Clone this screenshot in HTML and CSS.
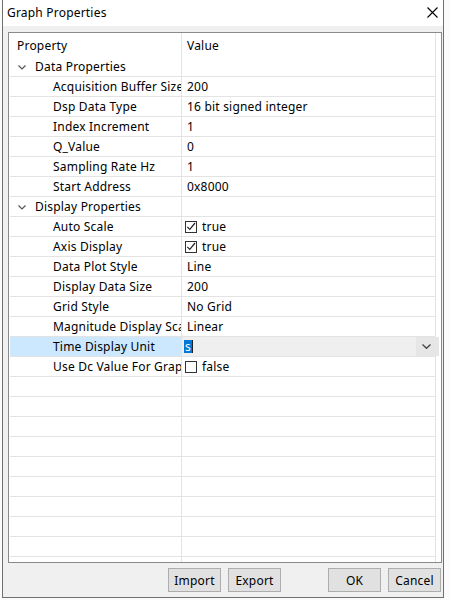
FILE: index.html
```html
<!DOCTYPE html>
<html>
<head>
<meta charset="utf-8">
<title>Graph Properties</title>
<link rel="stylesheet" href="styles.css">
</head>
<body>
<div class="dialog">
  <div class="titlebar">
    <span class="title">Graph Properties</span>
    <svg class="close" width="11" height="11" viewBox="0 0 11 11"><path d="M0.5 0.5 L10.5 10.5 M10.5 0.5 L0.5 10.5" stroke="#000" stroke-width="1.1" fill="none"/></svg>
  </div>
  <div class="content">
    <div class="grid">
      <div class="rows">
        <div class="row header"><div class="name">Property</div><div class="value">Value</div></div>
        <div class="row cat"><div class="name"><svg class="chev" width="8" height="5" viewBox="0 0 8 5"><polyline points="0.5,0.5 4,4 7.5,0.5" stroke="#555" stroke-width="1.2" fill="none"/></svg>Data Properties</div><div class="value"></div></div>
        <div class="row"><div class="name item">Acquisition Buffer Size</div><div class="value">200</div></div>
        <div class="row"><div class="name item">Dsp Data Type</div><div class="value">16 bit signed integer</div></div>
        <div class="row"><div class="name item">Index Increment</div><div class="value">1</div></div>
        <div class="row"><div class="name item">Q_Value</div><div class="value">0</div></div>
        <div class="row"><div class="name item">Sampling Rate Hz</div><div class="value">1</div></div>
        <div class="row"><div class="name item">Start Address</div><div class="value">0x8000</div></div>
        <div class="row cat"><div class="name"><svg class="chev" width="8" height="5" viewBox="0 0 8 5"><polyline points="0.5,0.5 4,4 7.5,0.5" stroke="#555" stroke-width="1.2" fill="none"/></svg>Display Properties</div><div class="value"></div></div>
        <div class="row"><div class="name item">Auto Scale</div><div class="value bool"><svg class="cb" width="12" height="12" viewBox="0 0 12 12"><rect x="0.5" y="0.5" width="11" height="11" fill="#fff" stroke="#333"/><path d="M2.3 5.8 L4.8 8.4 L10 2" stroke="#222" stroke-width="1.2" fill="none"/></svg>true</div></div>
        <div class="row"><div class="name item">Axis Display</div><div class="value bool"><svg class="cb" width="12" height="12" viewBox="0 0 12 12"><rect x="0.5" y="0.5" width="11" height="11" fill="#fff" stroke="#333"/><path d="M2.3 5.8 L4.8 8.4 L10 2" stroke="#222" stroke-width="1.2" fill="none"/></svg>true</div></div>
        <div class="row"><div class="name item">Data Plot Style</div><div class="value">Line</div></div>
        <div class="row"><div class="name item">Display Data Size</div><div class="value">200</div></div>
        <div class="row"><div class="name item">Grid Style</div><div class="value">No Grid</div></div>
        <div class="row"><div class="name item">Magnitude Display Scale</div><div class="value">Linear</div></div>
        <div class="row selected"><div class="name item">Time Display Unit</div><div class="value editing"><div class="combo"><span class="combo-text"><span class="sel">s</span></span><span class="combo-btn"><svg width="9" height="5" viewBox="0 0 9 5"><polyline points="0.5,0.5 4.5,4.3 8.5,0.5" stroke="#444" stroke-width="1.3" fill="none"/></svg></span></div></div></div>
        <div class="row"><div class="name item">Use Dc Value For Graph</div><div class="value bool"><svg class="cb" width="12" height="12" viewBox="0 0 12 12"><rect x="0.5" y="0.5" width="11" height="11" fill="#fff" stroke="#333"/></svg>false</div></div>
        <div class="row"><div class="name"></div><div class="value"></div></div>
        <div class="row"><div class="name"></div><div class="value"></div></div>
        <div class="row"><div class="name"></div><div class="value"></div></div>
        <div class="row"><div class="name"></div><div class="value"></div></div>
        <div class="row"><div class="name"></div><div class="value"></div></div>
        <div class="row"><div class="name"></div><div class="value"></div></div>
        <div class="row"><div class="name"></div><div class="value"></div></div>
        <div class="row"><div class="name"></div><div class="value"></div></div>
        <div class="row"><div class="name"></div><div class="value"></div></div>
        <div class="row tail"><div class="name"></div><div class="value"></div></div>
      </div>
    </div>
    <div class="footer">
      <div class="group left">
        <button class="btn">Import</button>
        <button class="btn">Export</button>
      </div>
      <div class="group">
        <button class="btn">OK</button>
        <button class="btn">Cancel</button>
      </div>
    </div>
  </div>
</div>
</body>
</html>
```

FILE: styles.css
```css
html, body {
  margin: 0;
  padding: 0;
}
body {
  background: #fbfbfb;
  font-family: "Noto Sans", "Open Sans", sans-serif;
  font-size: 12px;
  letter-spacing: 0.2px;
  color: #000;
}
.dialog {
  margin-left: 2px;
  width: 442px;
  height: 598px;
  box-sizing: border-box;
  border: 1px solid #6f6f6f;
  border-top: none;
  background: #f0f0f0;
  display: flex;
  flex-direction: column;
}
.titlebar {
  height: 26px;
  flex: none;
  background: #fff;
  display: flex;
  align-items: center;
  justify-content: space-between;
  padding: 0 5px 0 4px;
}
.title {
  font-size: 12px;
  line-height: 16px;
}
.close {
  display: block;
  margin-bottom: 1px;
}
.content {
  flex: 1;
  display: flex;
  flex-direction: column;
  padding: 6px 1px 5px 5px;
}
.grid {
  height: 531px;
  box-sizing: border-box;
  border: 1px solid #8a8a8a;
  background: #fff;
  padding-left: 1px;
  overflow: hidden;
}
.rows {
  width: 426px;
  height: 100%;
  box-sizing: border-box;
  border-right: 1px solid #e3e3e3;
}
.row {
  display: flex;
  height: 20px;
  box-sizing: border-box;
  border-bottom: 1px solid #e3e3e3;
}
.row.header {
  height: 24px;
  border-bottom: none;
}
.row.tail {
  height: 25px;
  border-bottom: none;
}
.row.tail .name,
.row.tail .value {
  height: 20px;
  border-bottom: 1px solid #e3e3e3;
  box-sizing: border-box;
}
.name {
  width: 172px;
  flex: none;
  box-sizing: border-box;
  padding-left: 7px;
  border-right: 1px solid #e3e3e3;
  white-space: nowrap;
  overflow: hidden;
  display: flex;
  align-items: center;
}
.name.item {
  padding-left: 43px;
}
.chev {
  display: block;
  margin: 1px 9px 0 1px;
  flex: none;
}
.value {
  flex: 1;
  min-width: 0;
  padding-left: 5px;
  display: flex;
  align-items: center;
  white-space: nowrap;
}
.value.bool {
  padding-left: 3px;
}
.cb {
  display: block;
  flex: none;
  margin-right: 5px;
}
.row.selected .name {
  background: #cce8ff;
}
.value.editing {
  padding-left: 0;
  align-items: stretch;
}
.combo {
  flex: 1;
  margin-right: -4px;
  display: flex;
  background: #efefef;
}
.combo-text {
  flex: 1;
  display: flex;
  align-items: center;
  padding-left: 2px;
}
.sel {
  background: #0078d7;
  color: #fff;
  line-height: 13px;
  padding: 0 1px;
  border-right: 1px solid #222;
}
.combo-btn {
  width: 21px;
  background: #e6e6e6;
  display: flex;
  align-items: center;
  justify-content: center;
  padding-right: 2px;
}
.combo-btn svg {
  display: block;
}
.footer {
  display: flex;
  justify-content: flex-end;
  margin-top: 5px;
  padding-right: 1px;
}
.group {
  display: flex;
  gap: 7px;
}
.group.left {
  margin-right: 47px;
}
.btn {
  width: 53px;
  height: 24px;
  box-sizing: border-box;
  border: 1px solid #adadad;
  background: #e1e1e1;
  font-family: "Noto Sans", "Open Sans", sans-serif;
  font-size: 12px;
  letter-spacing: 0.2px;
  color: #000;
  padding: 0;
  margin: 0;
}
```
